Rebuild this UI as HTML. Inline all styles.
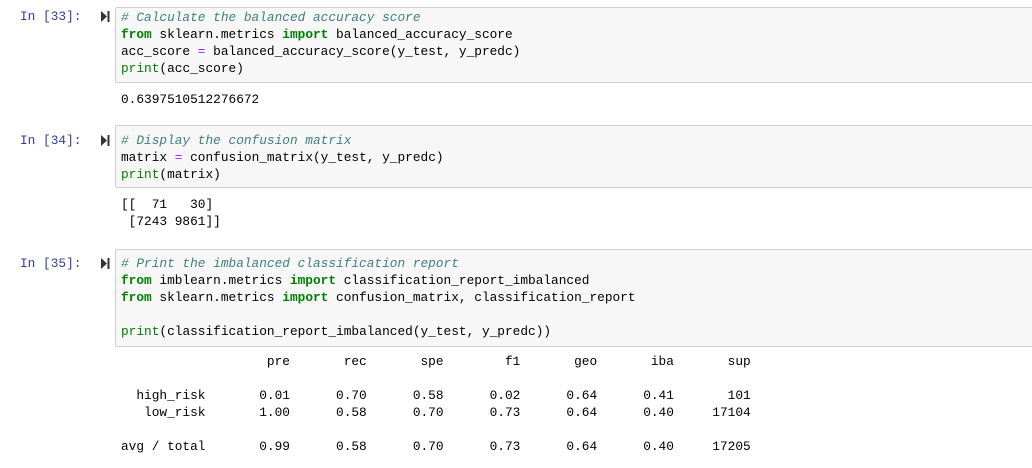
<!DOCTYPE html>
<html><head><meta charset="utf-8"><style>
body{margin:0;width:1032px;height:468px;background:#fff;overflow:hidden;position:relative;font-family:"Liberation Mono",monospace;font-size:12.8px;}
.p{position:absolute;left:20px;color:#303F9F;font-family:"Liberation Mono",monospace;font-size:12.8px;line-height:17px}
.box{position:absolute;left:115px;width:930px;background:#f7f7f7;border:1px solid #cfcfcf;border-radius:2px;box-sizing:border-box}
pre{margin:0;font-family:"Liberation Mono",monospace;font-size:12.8px;line-height:17px;color:#000;white-space:pre}
.code{position:absolute;left:5px;top:0px}
.out{position:absolute;left:121px}
.c{color:#408080;font-style:italic}
.k{color:#008000;font-weight:bold}
.b{color:#008000}
.o{color:#AA22FF}
.ic{position:absolute;left:101px;width:9px;height:11px}
</style></head><body>

<div class="p" style="top:8px">In [33]:</div>
<svg class="ic" style="top:11px" viewBox="0 0 9 11"><path d="M0 0 L6 5.5 L0 11Z" fill="#333"/><rect x="6.5" y="0" width="2" height="11" fill="#333"/></svg>
<div class="box" style="top:7px;height:76px"><pre class="code" style="top:1px"><span class="c"># Calculate the balanced accuracy score</span>
<span class="k">from</span> sklearn.metrics <span class="k">import</span> balanced_accuracy_score
acc_score <span class="o">=</span> balanced_accuracy_score(y_test, y_predc)
<span class="b">print</span>(acc_score)</pre></div>
<pre class="out" style="top:91px">0.6397510512276672</pre>

<div class="p" style="top:132px">In [34]:</div>
<svg class="ic" style="top:135px" viewBox="0 0 9 11"><path d="M0 0 L6 5.5 L0 11Z" fill="#333"/><rect x="6.5" y="0" width="2" height="11" fill="#333"/></svg>
<div class="box" style="top:125px;height:63px"><pre class="code" style="top:6px"><span class="c"># Display the confusion matrix</span>
matrix <span class="o">=</span> confusion_matrix(y_test, y_predc)
<span class="b">print</span>(matrix)</pre></div>
<pre class="out" style="top:196px">[[  71   30]
 [7243 9861]]</pre>

<div class="p" style="top:255px">In [35]:</div>
<svg class="ic" style="top:258px" viewBox="0 0 9 11"><path d="M0 0 L6 5.5 L0 11Z" fill="#333"/><rect x="6.5" y="0" width="2" height="11" fill="#333"/></svg>
<div class="box" style="top:249px;height:98px"><pre class="code" style="top:5px"><span class="c"># Print the imbalanced classification report</span>
<span class="k">from</span> imblearn.metrics <span class="k">import</span> classification_report_imbalanced
<span class="k">from</span> sklearn.metrics <span class="k">import</span> confusion_matrix, classification_report

<span class="b">print</span>(classification_report_imbalanced(y_test, y_predc))</pre></div>
<pre class="out" style="top:353px">                   pre       rec       spe        f1       geo       iba       sup

  high_risk       0.01      0.70      0.58      0.02      0.64      0.41       101
   low_risk       1.00      0.58      0.70      0.73      0.64      0.40     17104

avg / total       0.99      0.58      0.70      0.73      0.64      0.40     17205</pre>
</body></html>
